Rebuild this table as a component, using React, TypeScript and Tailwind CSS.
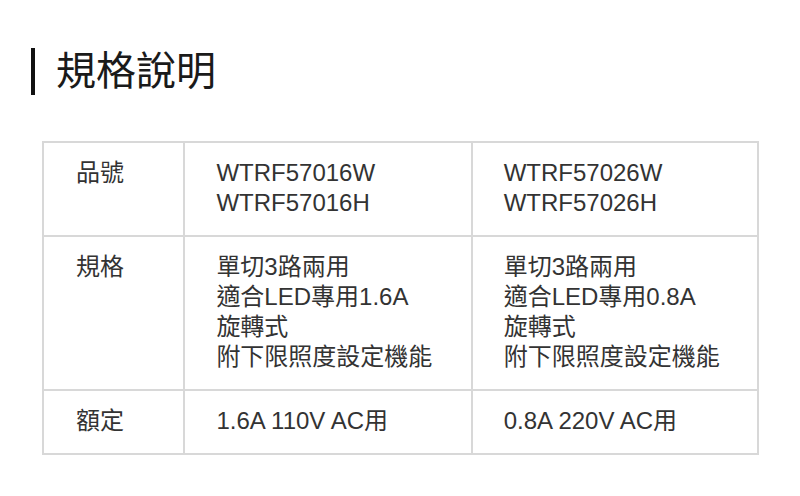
import React from "react";

const rows = [
  {
    label: "品號",
    a: ["WTRF57016W", "WTRF57016H"],
    b: ["WTRF57026W", "WTRF57026H"],
  },
  {
    label: "規格",
    a: ["單切3路兩用", "適合LED專用1.6A", "旋轉式", "附下限照度設定機能"],
    b: ["單切3路兩用", "適合LED專用0.8A", "旋轉式", "附下限照度設定機能"],
  },
  {
    label: "額定",
    a: ["1.6A 110V AC用"],
    b: ["0.8A 220V AC用"],
  },
];

export default function App() {
  return (
    <div
      className="w-[800px] h-[496px] bg-white pt-[48px] pl-[31px]"
      style={{ fontFamily: '"Liberation Sans", "Noto Sans CJK TC", sans-serif' }}
    >
      {/* Section heading */}
      <div className="flex items-center gap-[21px] h-[47px]">
        <div className="w-[4px] h-[47px] bg-[#111]" />
        <h2 className="text-[40px] leading-[47px] text-[#1a1a1a]">規格說明</h2>
      </div>

      {/* Spec table */}
      <table className="mt-[46px] ml-[11px] w-[717px] border-collapse text-[24px] leading-[30px] text-[#333]">
        <colgroup>
          <col className="w-[142px]" />
          <col className="w-[288px]" />
          <col className="w-[287px]" />
        </colgroup>
        <tbody>
          {rows.map((r) => (
            <tr key={r.label}>
              <td className="border-2 border-[#d8d8d8] align-top pt-[15px] pb-[17px] pl-[32px]">
                {r.label}
              </td>
              <td className="border-2 border-[#d8d8d8] align-top pt-[15px] pb-[17px] pl-[31px]">
                {r.a.map((t) => (
                  <div key={t}>{t}</div>
                ))}
              </td>
              <td className="border-2 border-[#d8d8d8] align-top pt-[15px] pb-[17px] pl-[31px]">
                {r.b.map((t) => (
                  <div key={t}>{t}</div>
                ))}
              </td>
            </tr>
          ))}
        </tbody>
      </table>
    </div>
  );
}
